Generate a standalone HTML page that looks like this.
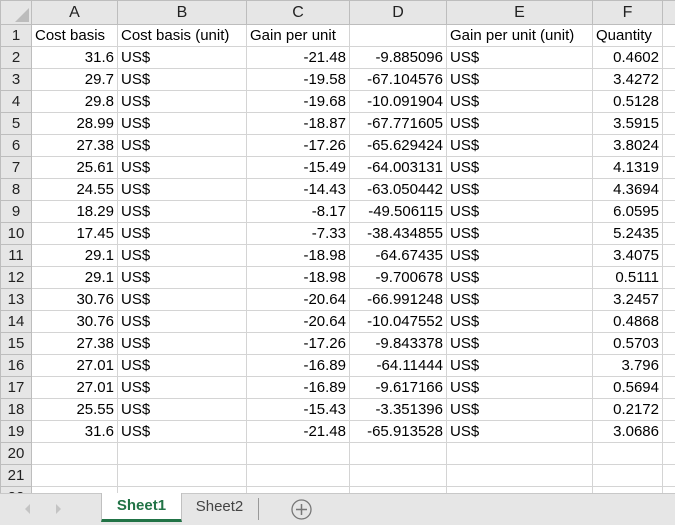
<!DOCTYPE html><html><head><style>
body{margin:0;width:675px;height:524px;overflow:hidden;background:#fff;font-family:"Liberation Sans",Arial,sans-serif;position:relative}
table{border-collapse:collapse;table-layout:fixed;position:absolute;left:0;top:0;width:682px}
td{border:1px solid #d4d4d4;height:21px;padding:0 3px;font-size:15px;white-space:nowrap;overflow:hidden;color:#000;line-height:21px}
td.r{text-align:right}
tr.h td{background:#e6e6e6;text-align:center;height:23px;border-color:#bdbdbd;font-size:16px;color:#222}
td.n{background:#e6e6e6;text-align:center;border-color:#bdbdbd;color:#222;padding:0}
.tabs{position:absolute;left:0;top:493px;width:675px;height:31px;background:#e6e6e6;border-top:1px solid #c8c8c8}
</style></head><body>
<table>
<colgroup><col style="width:31px"><col style="width:86px"><col style="width:129px"><col style="width:103px"><col style="width:97px"><col style="width:146px"><col style="width:70px"><col style="width:20px"></colgroup>
<tr class="h"><td style="position:relative"><svg style="position:absolute;right:2px;bottom:2px" width="14" height="14"><path d="M14 0V14H0Z" fill="#bcbcbc"/></svg></td><td>A</td><td>B</td><td>C</td><td>D</td><td>E</td><td>F</td><td></td></tr>
<tr><td class="n">1</td><td>Cost basis</td><td>Cost basis (unit)</td><td>Gain per unit</td><td></td><td>Gain per unit (unit)</td><td>Quantity</td><td></td></tr>
<tr><td class="n">2</td><td class="r">31.6</td><td>US$</td><td class="r">-21.48</td><td class="r">-9.885096</td><td>US$</td><td class="r">0.4602</td><td></td></tr>
<tr><td class="n">3</td><td class="r">29.7</td><td>US$</td><td class="r">-19.58</td><td class="r">-67.104576</td><td>US$</td><td class="r">3.4272</td><td></td></tr>
<tr><td class="n">4</td><td class="r">29.8</td><td>US$</td><td class="r">-19.68</td><td class="r">-10.091904</td><td>US$</td><td class="r">0.5128</td><td></td></tr>
<tr><td class="n">5</td><td class="r">28.99</td><td>US$</td><td class="r">-18.87</td><td class="r">-67.771605</td><td>US$</td><td class="r">3.5915</td><td></td></tr>
<tr><td class="n">6</td><td class="r">27.38</td><td>US$</td><td class="r">-17.26</td><td class="r">-65.629424</td><td>US$</td><td class="r">3.8024</td><td></td></tr>
<tr><td class="n">7</td><td class="r">25.61</td><td>US$</td><td class="r">-15.49</td><td class="r">-64.003131</td><td>US$</td><td class="r">4.1319</td><td></td></tr>
<tr><td class="n">8</td><td class="r">24.55</td><td>US$</td><td class="r">-14.43</td><td class="r">-63.050442</td><td>US$</td><td class="r">4.3694</td><td></td></tr>
<tr><td class="n">9</td><td class="r">18.29</td><td>US$</td><td class="r">-8.17</td><td class="r">-49.506115</td><td>US$</td><td class="r">6.0595</td><td></td></tr>
<tr><td class="n">10</td><td class="r">17.45</td><td>US$</td><td class="r">-7.33</td><td class="r">-38.434855</td><td>US$</td><td class="r">5.2435</td><td></td></tr>
<tr><td class="n">11</td><td class="r">29.1</td><td>US$</td><td class="r">-18.98</td><td class="r">-64.67435</td><td>US$</td><td class="r">3.4075</td><td></td></tr>
<tr><td class="n">12</td><td class="r">29.1</td><td>US$</td><td class="r">-18.98</td><td class="r">-9.700678</td><td>US$</td><td class="r">0.5111</td><td></td></tr>
<tr><td class="n">13</td><td class="r">30.76</td><td>US$</td><td class="r">-20.64</td><td class="r">-66.991248</td><td>US$</td><td class="r">3.2457</td><td></td></tr>
<tr><td class="n">14</td><td class="r">30.76</td><td>US$</td><td class="r">-20.64</td><td class="r">-10.047552</td><td>US$</td><td class="r">0.4868</td><td></td></tr>
<tr><td class="n">15</td><td class="r">27.38</td><td>US$</td><td class="r">-17.26</td><td class="r">-9.843378</td><td>US$</td><td class="r">0.5703</td><td></td></tr>
<tr><td class="n">16</td><td class="r">27.01</td><td>US$</td><td class="r">-16.89</td><td class="r">-64.11444</td><td>US$</td><td class="r">3.796</td><td></td></tr>
<tr><td class="n">17</td><td class="r">27.01</td><td>US$</td><td class="r">-16.89</td><td class="r">-9.617166</td><td>US$</td><td class="r">0.5694</td><td></td></tr>
<tr><td class="n">18</td><td class="r">25.55</td><td>US$</td><td class="r">-15.43</td><td class="r">-3.351396</td><td>US$</td><td class="r">0.2172</td><td></td></tr>
<tr><td class="n">19</td><td class="r">31.6</td><td>US$</td><td class="r">-21.48</td><td class="r">-65.913528</td><td>US$</td><td class="r">3.0686</td><td></td></tr>
<tr><td class="n">20</td><td></td><td></td><td></td><td></td><td></td><td></td><td></td></tr>
<tr><td class="n">21</td><td></td><td></td><td></td><td></td><td></td><td></td><td></td></tr>
<tr><td class="n">22</td><td></td><td></td><td></td><td></td><td></td><td></td><td></td></tr>
</table>
<div class="tabs">
<svg style="position:absolute;left:24px;top:9px" width="40" height="12"><path d="M6 1L1 6L6 11Z" fill="#c4c4c4"/><path d="M32 1L37 6L32 11Z" fill="#c4c4c4"/></svg>
<div style="position:absolute;left:101px;top:-1px;width:79px;height:26px;background:#fff;border-left:1px solid #c0c0c0;border-right:1px solid #c0c0c0;border-bottom:3px solid #217346;color:#217346;font-weight:bold;font-size:15px;text-align:center;line-height:26px">Sheet1</div>
<div style="position:absolute;left:181px;top:0;width:77px;height:26px;color:#444;font-size:15px;text-align:center;line-height:26px">Sheet2</div>
<div style="position:absolute;left:258px;top:4px;width:1px;height:22px;background:#999"></div>
<svg style="position:absolute;left:291px;top:5px" width="21" height="21"><circle cx="10.5" cy="10.5" r="9.5" fill="none" stroke="#777" stroke-width="1.3"/><path d="M10.5 5v11M5 10.5h11" stroke="#777" stroke-width="1.5"/></svg>
</div>
</body></html>
